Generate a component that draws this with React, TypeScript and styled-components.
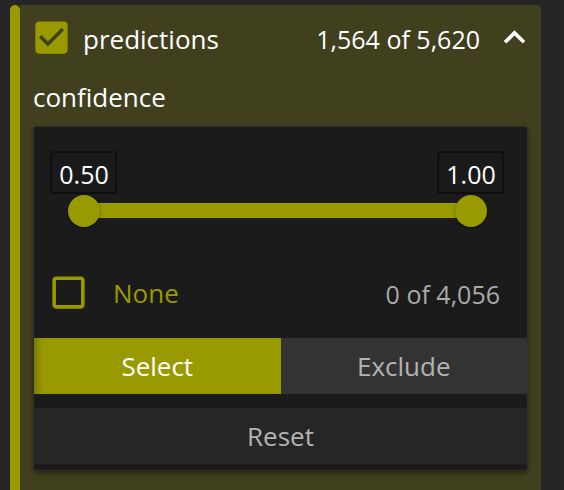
import React from "react";
import styled, { createGlobalStyle } from "styled-components";

const yellow = "#999900";
const olive = "#40401f";

const GlobalStyle = createGlobalStyle`
  body {
    margin: 0;
    background: #252525;
    font-family: "Open Sans", "Noto Sans", sans-serif;
    font-weight: 500;
    color: #fff;
  }
`;

const Page = styled.div`
  padding: 5px 0 0 10px;
  width: 531px;
  height: 485px;
  overflow: hidden;
`;

const Panel = styled.div`
  display: flex;
  height: 100%;
`;

const Bar = styled.div`
  width: 10px;
  flex: none;
  background: ${yellow};
  border-radius: 5px 5px 0 0;
`;

const Body = styled.div`
  flex: 1;
  background: ${olive};
  border-radius: 0 3px 0 0;
  padding: 0 13px;
`;

const Header = styled.div`
  height: 64px;
  display: flex;
  align-items: center;
  margin: 0 -8px 0 -3px;
`;

const Title = styled.span`
  flex: 1;
  font-size: 26px;
  margin-left: 10px;
  margin-top: 3px;
`;

const Count = styled.span<{ $muted?: boolean }>`
  font-size: 25px;
  color: ${(p) => (p.$muted ? "#aaaaaa" : "#ffffff")};
  margin-top: 3px;
`;

const Icon = styled.svg<{ $color: string }>`
  width: 43px;
  height: 43px;
  flex: none;
  fill: ${(p) => p.$color};
`;

const Chevron = styled(Icon)`
  margin-left: 13px;
`;

const Label = styled.div`
  font-size: 26px;
  height: 57px;
  line-height: 56px;
`;

const Card = styled.div`
  background: #1b1b1b;
  border: 1px solid #2f2f2f;
  border-radius: 3px;
  box-shadow: 0 2px 4px rgba(0, 0, 0, 0.45);
  padding-bottom: 6px;
`;

const SliderWrap = styled.div`
  padding: 76px 56px 0 50px;
`;

const Track = styled.div`
  position: relative;
  height: 15px;
  border-radius: 2px;
  background: ${yellow};
`;

const Thumb = styled.div<{ $at: "start" | "end" }>`
  position: absolute;
  top: 50%;
  left: ${(p) => (p.$at === "start" ? "0%" : "100%")};
  width: 32px;
  height: 32px;
  border-radius: 50%;
  background: ${yellow};
  transform: translate(-50%, -50%);
  box-shadow: 0 1px 3px rgba(0, 0, 0, 0.4);
`;

const ValueLabel = styled.div`
  position: absolute;
  bottom: calc(100% + 1px);
  left: 50%;
  transform: translateX(-50%);
  height: 39px;
  padding: 0 7px;
  border: 2px solid #0f0f0f;
  border-radius: 3px;
  background: #1a1a1a;
  font-size: 25px;
  line-height: 43px;
  white-space: nowrap;
`;

const NoneRow = styled.div`
  display: flex;
  align-items: center;
  margin-top: 49px;
  height: 50px;
  padding: 0 27px 0 13px;
`;

const NoneText = styled.span`
  flex: 1;
  color: ${yellow};
  font-size: 26px;
  margin-left: 23px;
  margin-top: 2px;
`;

const ButtonRow = styled.div`
  display: grid;
  grid-template-columns: 1fr 1fr;
  margin-top: 21px;
`;

const Button = styled.button<{ $active?: boolean; $bg?: string }>`
  height: 56px;
  border: none;
  margin: 0;
  padding: 0;
  font-family: inherit;
  font-weight: inherit;
  font-size: 26px;
  cursor: pointer;
  background: ${(p) => (p.$active ? yellow : p.$bg || "#333333")};
  color: ${(p) => (p.$active ? "#ffffff" : "#b3b3b3")};
  box-shadow: ${(p) => (p.$active ? "inset 8px 0 8px -6px rgba(0,0,0,0.3)" : "none")};
`;

const ResetButton = styled(Button)`
  display: block;
  width: 100%;
  margin-top: 14px;
`;

function CheckedBox() {
  return (
    <Icon $color={yellow} viewBox="0 0 24 24">
      <path d="M19 3H5c-1.11 0-2 .9-2 2v14c0 1.1.89 2 2 2h14c1.11 0 2-.9 2-2V5c0-1.1-.89-2-2-2zm-9 14l-5-5 1.41-1.41L10 14.17l7.59-7.59L19 8l-9 9z" />
    </Icon>
  );
}

function BlankBox() {
  return (
    <Icon $color={yellow} viewBox="0 0 24 24">
      <path d="M19 5v14H5V5h14m0-2H5c-1.1 0-2 .9-2 2v14c0 1.1.9 2 2 2h14c1.1 0 2-.9 2-2V5c0-1.1-.9-2-2-2z" />
    </Icon>
  );
}

export default function App() {
  const range = [0.5, 1.0];

  return (
    <Page>
      <GlobalStyle />
      <Panel>
        <Bar />
        <Body>
          <Header>
            <CheckedBox />
            <Title>predictions</Title>
            <Count>1,564 of 5,620</Count>
            <Chevron $color="#ffffff" viewBox="0 0 24 24">
              <path d="M12 8l-6 6 1.41 1.41L12 10.83l4.59 4.58L18 14z" />
            </Chevron>
          </Header>
          <Label>confidence</Label>
          <Card>
            <SliderWrap>
              <Track>
                <Thumb $at="start">
                  <ValueLabel>{range[0].toFixed(2)}</ValueLabel>
                </Thumb>
                <Thumb $at="end">
                  <ValueLabel>{range[1].toFixed(2)}</ValueLabel>
                </Thumb>
              </Track>
            </SliderWrap>
            <NoneRow>
              <BlankBox />
              <NoneText>None</NoneText>
              <Count $muted>0 of 4,056</Count>
            </NoneRow>
            <ButtonRow>
              <Button $active>Select</Button>
              <Button>Exclude</Button>
            </ButtonRow>
            <ResetButton $bg="#262626">Reset</ResetButton>
          </Card>
        </Body>
      </Panel>
    </Page>
  );
}
